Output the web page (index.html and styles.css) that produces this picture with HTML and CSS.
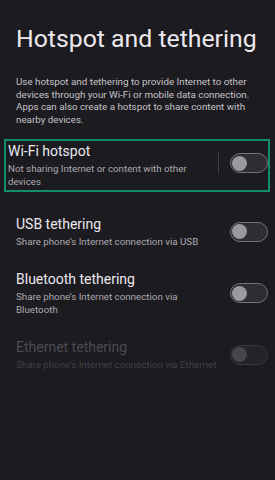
FILE: index.html
```html
<!DOCTYPE html>
<html lang="en">

<head>
    <meta charset="UTF-8">
    <title>Hotspot and tethering</title>
    <link rel="stylesheet" href="styles.css">
</head>

<body>

    <main class="screen">
        <h1 class="page-title">Hotspot and tethering</h1>

        <p class="intro">Use hotspot and tethering to provide Internet to other devices through your Wi-Fi or mobile data connection. Apps can also create a hotspot to share content with nearby devices.</p>

        <section class="settings">
            <div class="setting setting-focus">
                <div class="setting-text">
                    <div class="setting-title">Wi-Fi hotspot</div>
                    <div class="setting-sub">Not sharing Internet or content with other devices</div>
                </div>
                <span class="divider"></span>
                <span class="toggle"><span class="knob"></span></span>
            </div>

            <div class="setting">
                <div class="setting-text">
                    <div class="setting-title">USB tethering</div>
                    <div class="setting-sub">Share phone’s Internet connection via USB</div>
                </div>
                <span class="toggle"><span class="knob"></span></span>
            </div>

            <div class="setting">
                <div class="setting-text">
                    <div class="setting-title">Bluetooth tethering</div>
                    <div class="setting-sub">Share phone’s Internet connection via Bluetooth</div>
                </div>
                <span class="toggle"><span class="knob"></span></span>
            </div>

            <div class="setting setting-disabled">
                <div class="setting-text">
                    <div class="setting-title">Ethernet tethering</div>
                    <div class="setting-sub">Share phone’s Internet connection via Ethernet</div>
                </div>
                <span class="toggle"><span class="knob"></span></span>
            </div>
        </section>
    </main>

</body>

</html>
```

FILE: styles.css
```css
body {
    margin: 0;
    background-color: #1c1b1f;
    font-family: Roboto, "Noto Sans", sans-serif;
    color: #e6e1e5;
}

.screen {
    height: 480px;
    overflow: hidden;
}

.page-title {
    margin: 0;
    padding: 24px 16px 0 16px;
    font-size: 24.8px;
    font-weight: 400;
    line-height: 30px;
    color: #ece8ee;
}

.intro {
    margin: 22px 16px 0 16px;
    font-size: 9.8px;
    line-height: 12.5px;
    color: #c6c2c8;
}

.settings {
    margin-top: 13px;
}

.setting {
    display: flex;
    align-items: center;
    margin: 0 5px 0 4px;
    padding: 1px 0 2px 10px;
    border: 2px solid transparent;
}

.setting + .setting {
    margin-top: 15px;
}

/* highlighted row: margins collapse, so this wins over the 15px */
.setting-focus {
    padding-left: 2px;
    margin-bottom: 20px;
    border-color: #138b6d;
}

.setting-text {
    flex: 1;
    padding-right: 11px;
}

.setting-focus .setting-text {
    padding-right: 0;
}

.setting-title {
    font-size: 14px;
    line-height: 18px;
    color: #ece8ee;
}

.setting-sub {
    margin-top: 2px;
    font-size: 9.75px;
    line-height: 13px;
    color: #aeaab0;
}

.divider {
    width: 1px;
    height: 22px;
    margin: -4px 11px 0 0;
    background-color: #3e3c42;
}

.toggle {
    display: flex;
    align-items: center;
    box-sizing: border-box;
    width: 38px;
    height: 20px;
    padding: 0 1px;
    border: 1.5px solid #747177;
    border-radius: 10px;
    background-color: #2e2d32;
}

.setting-focus .toggle {
    margin-top: -4px;
}

.knob {
    width: 15px;
    height: 15px;
    border-radius: 50%;
    background-color: #9b989e;
}

.setting-disabled .setting-title {
    color: #4d4a51;
}

.setting-disabled .setting-sub {
    color: #433f46;
}

.setting-disabled .toggle {
    border-color: #38363b;
    background-color: #242327;
}

.setting-disabled .knob {
    background-color: #48464b;
}
```
